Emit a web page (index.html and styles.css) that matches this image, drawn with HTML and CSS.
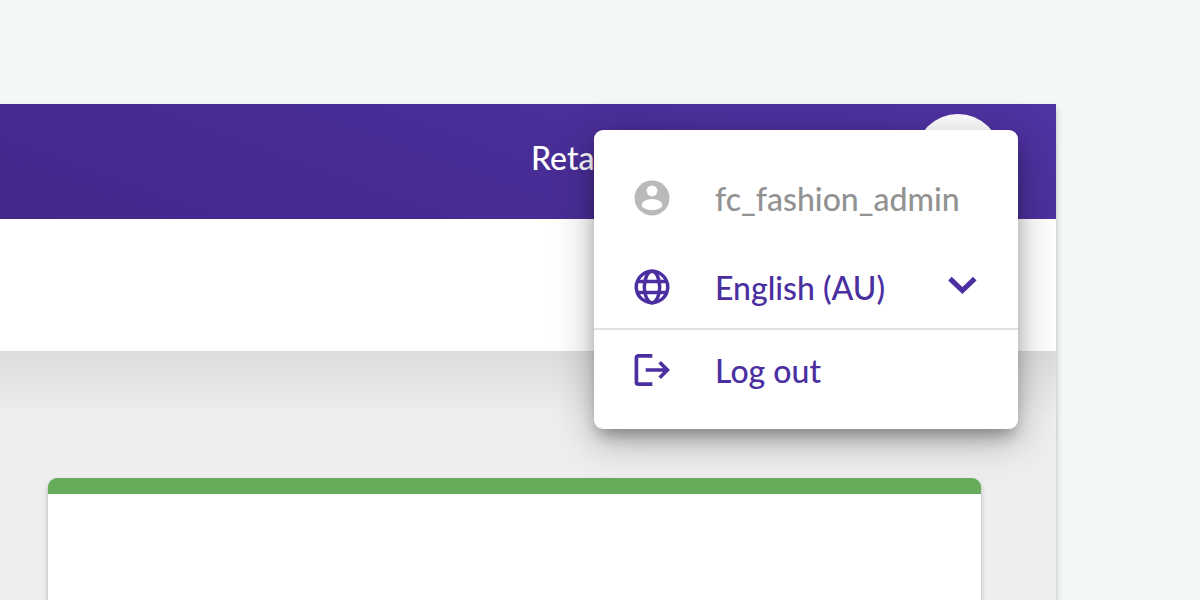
FILE: index.html
```html
<!DOCTYPE html>
<html lang="en">
<head>
    <meta charset="UTF-8">
    <meta name="viewport" content="width=device-width, initial-scale=1.0">
    <title>User menu</title>
    <link rel="stylesheet" href="styles.css">
</head>
<body>
    <div class="app">
        <header class="app-header">
            <span class="account-name">Reta</span>
            <div class="avatar"></div>
        </header>

        <div class="toolbar"></div>

        <main class="content">
            <section class="card"></section>
        </main>

        <!-- User menu -->
        <nav class="user-menu">
            <div class="menu-item user">
                <svg class="icon" viewBox="0 0 24 24" aria-hidden="true">
                    <circle cx="12" cy="12" r="10" fill="currentColor"/>
                    <circle cx="12" cy="7.9" r="3.1" fill="#fff"/>
                    <ellipse cx="12" cy="15.8" rx="5.9" ry="3.2" fill="#fff"/>
                </svg>
                <span>fc_fashion_admin</span>
            </div>
            <button class="menu-item language" type="button">
                <svg class="icon" viewBox="0 0 24 24" fill="none" stroke="currentColor" stroke-width="2" aria-hidden="true">
                    <circle cx="12" cy="12" r="9"/>
                    <ellipse cx="12" cy="12" rx="4.4" ry="9"/>
                    <path d="M3.5 8.8h17M3.5 15.2h17"/>
                </svg>
                <span>English (AU)</span>
                <svg class="icon chevron" viewBox="0 0 24 24" fill="none" stroke="currentColor" stroke-width="2.9" aria-hidden="true">
                    <path d="M5.1 7.2l7.1 6.8 7.1-6.8"/>
                </svg>
            </button>
            <button class="menu-item logout" type="button">
                <svg class="icon" viewBox="0 0 24 24" fill="none" stroke="currentColor" stroke-width="2.1" aria-hidden="true">
                    <path d="M12.2 3.9H4.2a1.1 1.1 0 0 0-1.1 1.1v14a1.1 1.1 0 0 0 1.1 1.1h8"/>
                    <path d="M8.4 12h12.2M16.4 7.6l4.4 4.4-4.4 4.4"/>
                </svg>
                <span>Log out</span>
            </button>
        </nav>
    </div>
</body>
</html>
```

FILE: styles.css
```css
* {
    box-sizing: border-box;
}

body {
    margin: 0;
    min-height: 100vh;
    display: flex;
    padding: 104px 144px 0 0;
    background: #f3f7f8;
    font-family: 'Lato', sans-serif;
    font-size: 32px;
    overflow: hidden;
}

.app {
    position: relative;
    flex: 1;
    display: flex;
    flex-direction: column;
    background: #eee;
    box-shadow: 0 4px 6px rgba(0, 0, 0, 0.25);
}

/* Header */
.app-header {
    display: flex;
    align-items: center;
    justify-content: flex-end;
    height: 115px;
    padding: 0 55px 9px 0;
    background: linear-gradient(20deg, #43278a, #4f33a3);
    color: #fff;
    font-weight: 500;
}

.account-name {
    width: 384px;
}

.avatar {
    width: 86px;
    height: 86px;
    border-radius: 50%;
    background: #fff;
}

.toolbar {
    height: 132px;
    background: #fff;
}

/* Content */
.content {
    flex: 1;
    display: flex;
    padding: 127px 75px 0 48px;
    background: linear-gradient(#dcdcdc, #eee 64px);
}

.card {
    flex: 1;
    border-top: 16px solid #67ac5b;
    border-radius: 9px 9px 0 0;
    background: #fff;
    box-shadow: 0 3px 5px rgba(0, 0, 0, 0.25);
}

/* User menu */
.user-menu {
    position: absolute;
    top: 26px;
    right: 38px;
    width: 424px;
    padding: 24px 0 19px;
    border-radius: 9px;
    background: #fff;
    box-shadow: 0 10px 16px -4px rgba(0, 0, 0, 0.3), 0 10px 40px rgba(0, 0, 0, 0.3);
}

.menu-item {
    display: flex;
    align-items: center;
    gap: 42px;
    width: 100%;
    height: 88px;
    padding: 0 35px 0 37px;
    border: 0;
    background: none;
    color: #4b2fa0;
    font: inherit;
    font-weight: 500;
    text-align: left;
}

button.menu-item {
    cursor: pointer;
}

.menu-item.user {
    color: #929292;
}

.user .icon {
    color: #bababa;
}

.menu-item.language {
    padding-top: 4px;
    border-bottom: 2px solid #e0e0e0;
}

.menu-item.logout {
    height: 80px;
}

.icon {
    flex: none;
    width: 42px;
    height: 42px;
}

.chevron {
    margin-left: auto;
}
```
